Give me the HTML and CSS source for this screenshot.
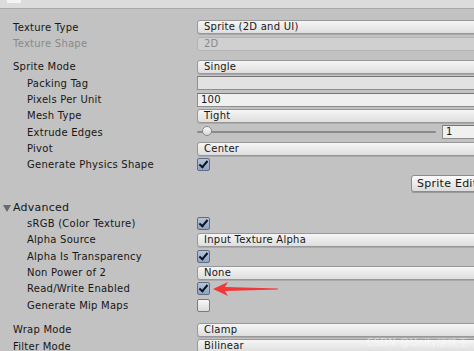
FILE: index.html
```html
<html>
<head>
    <meta charset="utf-8">
    <link rel="stylesheet" href="styles.css">
</head>
<body>
<div class="topbar"><span class="tab"></span></div>
<div class="inspector">
    <div class="row"><label>Texture Type</label><div class="popup">Sprite (2D and UI)</div></div>
    <div class="row disabled"><label>Texture Shape</label><div class="popup">2D</div></div>
    <div class="gap"></div>
    <div class="row"><label>Sprite Mode</label><div class="popup">Single</div></div>
    <div class="row sub"><label>Packing Tag</label><div class="text dark"></div></div>
    <div class="row sub"><label>Pixels Per Unit</label><div class="text">100</div></div>
    <div class="row sub"><label>Mesh Type</label><div class="popup">Tight</div></div>
    <div class="row sub"><label>Extrude Edges</label>
        <div class="slider"><div class="track"><span class="knob"></span></div><div class="text num">1</div></div>
    </div>
    <div class="row sub"><label>Pivot</label><div class="popup">Center</div></div>
    <div class="row sub"><label>Generate Physics Shape</label><div><span class="check on"></span></div></div>
    <div class="btnrow"><span class="button">Sprite Editor</span></div>
    <div class="row fold"><label><span class="tri"></span>Advanced</label><div></div></div>
    <div class="row sub"><label>sRGB (Color Texture)</label><div><span class="check on"></span></div></div>
    <div class="row sub"><label>Alpha Source</label><div class="popup">Input Texture Alpha</div></div>
    <div class="row sub"><label>Alpha Is Transparency</label><div><span class="check on"></span></div></div>
    <div class="row sub"><label>Non Power of 2</label><div class="popup">None</div></div>
    <div class="row sub"><label>Read/Write Enabled</label>
        <div class="mark"><span class="check on"></span>
            <svg class="arrow" width="66" height="14" viewBox="0 0 66 14"><path d="M0 7 L15 0 L12 5 L65 6.5 L65 7.5 L12 9 L15 14 Z" fill="#f03838"/></svg>
        </div>
    </div>
    <div class="row sub"><label>Generate Mip Maps</label><div><span class="check"></span></div></div>
    <div class="gap2"></div>
    <div class="row"><label>Wrap Mode</label><div class="popup">Clamp</div></div>
    <div class="row"><label>Filter Mode</label><div class="popup">Bilinear</div></div>
</div>
<div class="watermark">CSDN @Unity游戏王</div>
</body>
</html>
```
FILE: styles.css
```css
body {margin:0; background:#c2c2c2; font-family:"DejaVu Sans", Verdana, sans-serif; font-size:10px; letter-spacing:0.25px; color:#161616; overflow:hidden; height:351px; position:relative;}
.topbar {height:8px; background:#dcdcdc; border-bottom:1px solid #a8a8a8;}
.tab {display:block; margin-left:7px; width:14px; height:3px; background:#f4f4f4;}
.inspector {padding-top:10px;}
.row {display:grid; grid-template-columns:197px 290px; height:16.35px; align-items:center;}
.row label {padding-left:13px; white-space:nowrap;}
.row.sub label {padding-left:27px;}
.row.disabled {color:#8a8a8a;}
.gap {height:7px;}
.gap2 {height:8px;}
.popup {height:12px; line-height:12px; padding-left:6px; border:1px solid #989898; border-radius:3px;
    background:linear-gradient(#f6f6f6, #dedede); box-shadow:0 1px 0 #aaa;}
.disabled .popup {background:#d0d0d0; border-color:#b4b4b4; box-shadow:none;}
.text {height:12px; line-height:12px; padding-left:3px; background:#f0f0f0; border:1px solid #8e8e8e; border-top-color:#777;}
.text.dark {background:#e2e2e2;}
.slider {display:flex; align-items:center; gap:6px;}
.track {position:relative; width:241px; height:2px; background:#8a8a8a; border-radius:1px;}
.knob {position:absolute; left:5px; top:-5px; width:10px; height:10px; border-radius:50%; background:linear-gradient(#fafafa, #d8d8d8); border:1px solid #8a8a8a; box-sizing:border-box;}
.num {width:40px; flex:none;}
.check {display:inline-block; width:11px; height:11px; border:1px solid #7a7a7a; border-radius:2px; background:linear-gradient(#f8f8f8, #dadada); vertical-align:middle; position:relative;}
.check.on {background:linear-gradient(#b6c4d8, #8ea2bf); border-color:#5b6d88;}
.check.on::after {content:""; position:absolute; left:3px; top:0; width:3px; height:7px; border:solid #0b1220; border-width:0 2.5px 2.5px 0; transform:rotate(40deg);}
.mark {display:flex; align-items:center; gap:3px;}
.btnrow {display:flex; justify-content:flex-end; height:19px; align-items:center; padding:1px 0 6px;}
.button {margin-right:-20px; padding:0 4px 0 5px; height:15px; line-height:15px; font-size:11px; border:1px solid #8c8c8c; border-radius:3px; background:linear-gradient(#fbfbfb, #dcdcdc); box-shadow:0 1px 0 #999;}
.fold label {padding-left:3px; font-size:11px;}
.tri {display:inline-block; width:0; height:0; border-left:4px solid transparent; border-right:4px solid transparent; border-top:7px solid #6a6a6a; margin-right:2px; vertical-align:-1px;}
.watermark {position:absolute; right:6px; bottom:1px; color:rgba(255,255,255,0.55); font-size:10px;}
```
